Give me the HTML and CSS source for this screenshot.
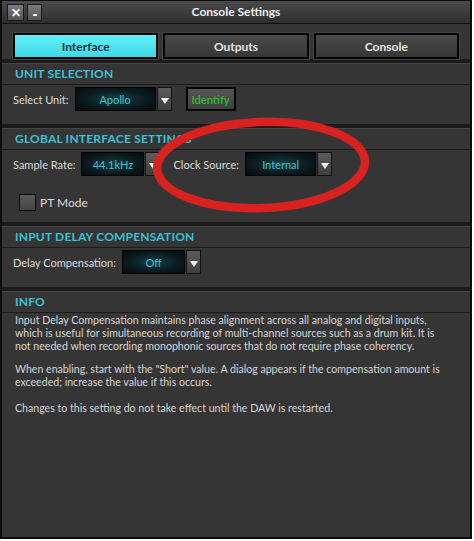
FILE: index.html
```html
<!DOCTYPE html>
<html lang="en">
<head>
  <meta charset="UTF-8">
  <meta name="viewport" content="width=device-width, initial-scale=1.0">
  <title>Console Settings</title>
  <link rel="stylesheet" href="styles.css">
</head>
<body>
  <div class="window">
    <div class="titlebar">
      <div class="win-btn close">&#x2715;</div>
      <div class="win-btn minimize"><span class="dash"></span></div>
      <div class="title">Console Settings</div>
    </div>

    <div class="tabs">
      <div class="tab active">Interface</div>
      <div class="tab">Outputs</div>
      <div class="tab">Console</div>
    </div>

    <div class="section">
      <div class="section-head">UNIT SELECTION</div>
      <div class="section-body">
        <div class="row">
          <span class="label">Select Unit:</span>
          <div class="dropdown">
            <div class="value unit">Apollo</div>
            <div class="arrow"></div>
          </div>
          <div class="identify">Identify</div>
        </div>
      </div>
    </div>

    <div class="section">
      <div class="section-head">GLOBAL INTERFACE SETTINGS</div>
      <div class="section-body">
        <div class="row">
          <span class="label">Sample Rate:</span>
          <div class="dropdown">
            <div class="value rate">44.1kHz</div>
            <div class="arrow"></div>
          </div>
          <span class="label clock-label">Clock Source:</span>
          <div class="dropdown">
            <div class="value clock">Internal</div>
            <div class="arrow"></div>
          </div>
        </div>
        <div class="row check-row">
          <div class="checkbox"></div>
          <span class="label">PT Mode</span>
        </div>
      </div>
    </div>

    <div class="section">
      <div class="section-head">INPUT DELAY COMPENSATION</div>
      <div class="section-body">
        <div class="row">
          <span class="label">Delay Compensation:</span>
          <div class="dropdown">
            <div class="value delay">Off</div>
            <div class="arrow"></div>
          </div>
        </div>
      </div>
    </div>

    <div class="section info">
      <div class="section-head">INFO</div>
      <div class="section-body">
        <p>Input Delay Compensation maintains phase alignment across all analog and digital inputs, which is useful for simultaneous recording of multi-channel sources such as a drum kit. It is not needed when recording monophonic sources that do not require phase coherency.</p>
        <p>When enabling, start with the "Short" value. A dialog appears if the compensation amount is exceeded; increase the value if this occurs.</p>
        <p class="last">Changes to this setting do not take effect until the DAW is restarted.</p>
      </div>
    </div>

    <!-- red annotation drawn over the clock source control -->
    <svg class="highlight" width="230" height="104" viewBox="0 0 230 104">
      <ellipse cx="115" cy="52" rx="104" ry="43" fill="none" stroke="#d8221f" stroke-width="8.5" transform="rotate(-2 115 52)"/>
    </svg>
  </div>
</body>
</html>
```

FILE: styles.css
```css
body {
  margin: 0;
  padding: 0;
  background-color: #fff;
  font-family: "Lato", "Liberation Sans", Arial, sans-serif;
}

.window {
  position: relative;
  width: 468px;
  height: 536px;
  background-color: #353535;
  border: 2px solid #0c0c0c;
  border-top-width: 1px;
  overflow: hidden;
}

.titlebar {
  position: relative;
  height: 22px;
  display: flex;
  align-items: center;
  gap: 3px;
  padding-left: 5px;
  background: linear-gradient(#4a4a4a, #2e2e2e);
  border-bottom: 1px solid #111;
}

.win-btn {
  width: 15px;
  height: 15px;
  border: 1px solid #1a1a1a;
  background: linear-gradient(#7a7a7a, #555);
  color: #fff;
  font-size: 12px;
  font-weight: bold;
  display: flex;
  align-items: center;
  justify-content: center;
}

.win-btn.minimize {
  width: 13px;
}

.dash {
  width: 4px;
  height: 2px;
  margin-top: 6px;
  background: #fff;
}

.title {
  position: absolute;
  left: 0;
  right: 0;
  top: 0;
  line-height: 22px;
  text-align: center;
  color: #f0f0f0;
  font-size: 12px;
  font-weight: bold;
  pointer-events: none;
}

.tabs {
  display: flex;
  gap: 5px;
  padding: 9px 11px 0 11px;
  height: 26px;
}

.tab {
  flex: 1;
  border: 2px solid #050505;
  background: linear-gradient(#4a4a4a, #363636);
  color: #e6e6e6;
  font-size: 12px;
  font-weight: bold;
  display: flex;
  align-items: center;
  justify-content: center;
  box-shadow: 0 0 0 1px #444;
}

.tab.active {
  background: linear-gradient(#62f0fa, #3fd8e6);
  color: #10323a;
}

.section-head {
  border-top: 4px solid #1b1b1b;
  padding: 4px 13px 3px 13px;
  line-height: 14px;
  font-size: 12px;
  font-weight: bold;
  color: #3cc0d4;
  letter-spacing: 0.2px;
  border-bottom: 1px solid #1b1b1b;
  box-shadow: inset 0 1px 0 #454545;
}

.section-body {
  padding: 2px 11px 13px 11px;
}

.row {
  display: flex;
  align-items: center;
  height: 24px;
}

.label {
  color: #dcdcdc;
  font-size: 11px;
  margin-right: 6px;
}

.dropdown {
  display: flex;
  gap: 1px;
  height: 24px;
}

.value {
  border: 1px solid #000;
  background: radial-gradient(ellipse at center, #17414a 0%, #0b1c20 55%, #060a0b 100%);
  color: #3fc3d2;
  font-size: 11px;
  display: flex;
  align-items: center;
  justify-content: center;
  box-sizing: border-box;
}

.value.unit { width: 81px; }
.value.rate { width: 63px; }
.value.clock { width: 71px; }
.value.delay { width: 63px; }

.arrow {
  position: relative;
  width: 15px;
  border: 1px solid #111;
  background: linear-gradient(#5c5c5c, #3e3e3e);
  box-sizing: border-box;
}

.arrow::after {
  content: "";
  position: absolute;
  left: 3px;
  top: 10px;
  border-left: 4px solid transparent;
  border-right: 4px solid transparent;
  border-top: 6px solid #f2f2f2;
}

.identify {
  margin-left: 14px;
  width: 50px;
  height: 24px;
  border: 2px solid #050505;
  background: linear-gradient(#555, #3f3f3f);
  color: #2fb534;
  font-size: 11px;
  font-weight: bold;
  display: flex;
  align-items: center;
  justify-content: center;
  box-sizing: border-box;
}

.clock-label {
  margin-left: 13px;
}

.check-row {
  margin-top: 17px;
  height: 18px;
  padding-left: 6px;
}

.checkbox {
  width: 15px;
  height: 15px;
  border: 1px solid #0a0a0a;
  background: linear-gradient(#5a5a5a, #444);
  margin-right: 4px;
}

.check-row .label {
  font-size: 12px;
}

.section:nth-child(4) .section-body {
  padding-bottom: 11px;
}

.info .section-body {
  padding: 1px 23px 0 13px;
}

.info p {
  margin: 0 0 10px 0;
  color: #d6d6d6;
  font-size: 10.6px;
  line-height: 13px;
}

.info p.last {
  margin-top: 13px;
}

.highlight {
  position: absolute;
  left: 144px;
  top: 112px;
}
```
